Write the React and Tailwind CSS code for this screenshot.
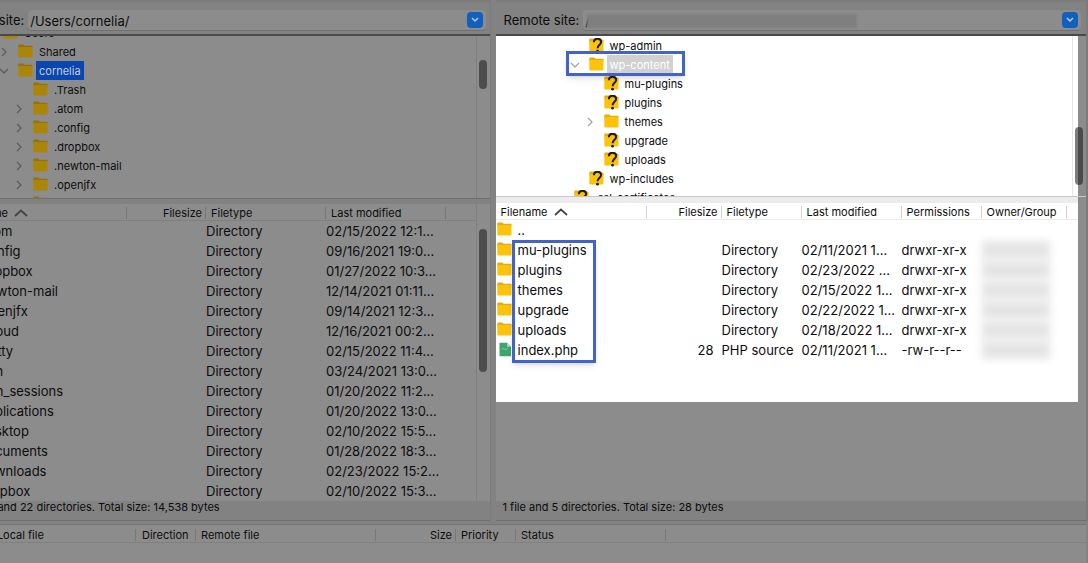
import React from "react";

const localTree = [
  { name: "Users", depth: 0, arrow: "down" },
  { name: "Shared", depth: 1, arrow: "right" },
  { name: "cornelia", depth: 1, arrow: "down", selected: true },
  { name: ".Trash", depth: 2 },
  { name: ".atom", depth: 2, arrow: "right" },
  { name: ".config", depth: 2, arrow: "right" },
  { name: ".dropbox", depth: 2, arrow: "right" },
  { name: ".newton-mail", depth: 2, arrow: "right" },
  { name: ".openjfx", depth: 2, arrow: "right" },
  { name: ".icloud", depth: 2, arrow: "right" },
];

const remoteTree = [
  { name: "wp-admin", depth: 1, unknown: true },
  { name: "wp-content", depth: 1, arrow: "down", selected: true },
  { name: "mu-plugins", depth: 2, unknown: true },
  { name: "plugins", depth: 2, unknown: true },
  { name: "themes", depth: 2, arrow: "right" },
  { name: "upgrade", depth: 2, unknown: true },
  { name: "uploads", depth: 2, unknown: true },
  { name: "wp-includes", depth: 1, unknown: true },
  { name: ".ssl_certificates", depth: 0, unknown: true },
];

const localFiles = [
  [".atom", "02/15/2022 12:1..."],
  [".config", "09/16/2021 19:0..."],
  [".dropbox", "01/27/2022 10:3..."],
  [".newton-mail", "12/14/2021 01:11..."],
  [".openjfx", "09/14/2021 12:3..."],
  [".icloud", "12/16/2021 00:2..."],
  [".putty", "02/15/2022 11:4..."],
  [".ssh", "03/24/2021 13:0..."],
  [".zsh_sessions", "01/20/2022 11:2..."],
  ["Applications", "01/20/2022 13:0..."],
  ["Desktop", "02/10/2022 15:5..."],
  ["Documents", "01/28/2022 18:3..."],
  ["Downloads", "02/23/2022 15:2..."],
  ["Dropbox", "02/10/2022 15:3..."],
];

const remoteFiles = [
  ["mu-plugins", "", "Directory", "02/11/2021 1...", "drwxr-xr-x"],
  ["plugins", "", "Directory", "02/23/2022 ...", "drwxr-xr-x"],
  ["themes", "", "Directory", "02/15/2022 1...", "drwxr-xr-x"],
  ["upgrade", "", "Directory", "02/22/2022 1...", "drwxr-xr-x"],
  ["uploads", "", "Directory", "02/18/2022 1...", "drwxr-xr-x"],
  ["index.php", "28", "PHP source", "02/11/2021 1...", "-rw-r--r--"],
];

const indents = ["pl-0", "pl-[15px]", "pl-[30px]"];

function Folder({ dim, unknown }) {
  return (
    <svg viewBox="0 0 15 15" className="h-[15px] w-[15px] shrink-0" aria-hidden="true">
      <path d="M.3 1.6Q.3.6 1.4.6h3.9l1.3 1.2h7.1q.8 0 .8.8v2H.3z" fill={dim ? "#957108" : "#e8ab0c"} />
      <path d="M.3 3h14.2v9.4q0 1-1 1H1.3q-1 0-1-1z" fill={dim ? "#ab8508" : "#fcc30d"} />
      {unknown && (
        <g>
          <path
            d="M4.9 4.3C4.9 1.9 6.3.8 8.5.8s3.6 1.2 3.6 3.2c0 2.6-3.5 3-3.5 6.2"
            fill="none"
            stroke="#1d1a10"
            strokeWidth="2"
          />
          <circle cx="8.5" cy="13.2" r="1.4" fill="#1d1a10" />
        </g>
      )}
    </svg>
  );
}

function PhpFile() {
  return (
    <svg viewBox="0 0 15 15" className="h-[15px] w-[15px] shrink-0" aria-hidden="true">
      <path d="M2.5.8h7.5l4 4v9.4H2.5z" fill="#3fa66b" />
      <path d="M10 .8v4h4z" fill="#a5d8ba" />
      <path d="M4.5 8q1.5-3 3-1t3.5-1" fill="none" stroke="#7cc79b" />
    </svg>
  );
}

function Arrow({ kind, dim }) {
  return (
    <svg viewBox="0 0 10 10" className="ml-[2px] h-[10px] w-[10px] shrink-0" aria-hidden="true">
      {kind && (
        <path
          d={kind === "right" ? "M3 1l4 4-4 4" : "M1 3l4 4 4-4"}
          fill="none"
          stroke={dim ? "#5c5c5c" : "#a6a6a6"}
          strokeWidth="1.3"
        />
      )}
    </svg>
  );
}

function SortMark() {
  return (
    <svg viewBox="0 0 14 8" className="h-2 w-[14px] shrink-0" aria-hidden="true">
      <path d="M1 7l6-5.5L13 7" fill="none" stroke="#444" strokeWidth="1.8" />
    </svg>
  );
}

function Tree({ rows, dim, label }) {
  return (
    <ul className="min-w-0 flex-1" aria-label={label}>
      {rows.map((r) => (
        <li key={r.name} className={"flex h-[19px] items-center " + indents[r.depth]}>
          <Arrow kind={r.arrow} dim={dim} />
          <span className="w-[9px] shrink-0" />
          <Folder dim={dim} unknown={r.unknown} />
          <span
            className={
              "ml-[3px] h-[19px] px-[3px] text-[11px] leading-[21px] " +
              (r.selected ? (dim ? "bg-[#0a45b0] text-[#c4cbd8]" : "bg-[#d1d1d1] text-white") : "")
            }
          >
            {r.name}
          </span>
        </li>
      ))}
    </ul>
  );
}

function SiteBar({ id, label, value, className, children }) {
  return (
    <div className={"flex h-[34px] items-start border-t-2 border-[#7c7c7c] pt-[8px] " + className}>
      <label htmlFor={id} className="h-5 shrink-0 whitespace-nowrap text-[13px] leading-[21px]">
        {label}
      </label>
      <div className="relative ml-1 flex h-[21px] min-w-0 flex-1 items-center rounded border-b border-[#717171] bg-[#8c8c8c] pl-[2px] pr-[3px]">
        <input
          id={id}
          defaultValue={value}
          className="h-5 w-full min-w-0 bg-transparent pt-px text-[13px] outline-none"
        />
        {children}
        <button
          type="button"
          aria-label="Show recent folders"
          className="flex h-4 w-4 shrink-0 items-center justify-center rounded bg-[#1260be]"
        >
          <svg viewBox="0 0 8 6" className="h-[6px] w-2" aria-hidden="true">
            <path d="M1 1l3 3 3-3" fill="none" stroke="#b9c9de" strokeWidth="1.5" />
          </svg>
        </button>
      </div>
    </div>
  );
}

const th = "h-4 p-0 align-top text-[11px] font-normal whitespace-nowrap border-b ";
const td = "h-5 p-0 text-[13px] leading-5 whitespace-nowrap ";

function Head({ children, dim, right, last }) {
  return (
    <th className={th + (dim ? "border-[#808080]" : "border-[#ececec]")}>
      <div
        className={
          "mt-[3px] flex h-3 items-center gap-[6px] leading-3 " +
          (right ? "justify-end pr-[3px] " : "pl-[5px] ") +
          (last ? "" : "border-r ") +
          (dim ? "border-[#777777]" : "border-[#d2d2d2]")
        }
      >
        {children}
      </div>
    </th>
  );
}

function LocalFiles() {
  return (
    <table className="-ml-[44px] w-[521px] table-fixed border-collapse text-left">
      <colgroup>
        <col className="w-[171px]" />
        <col className="w-[79px]" />
        <col className="w-[120px]" />
        <col className="w-[120px]" />
        <col />
      </colgroup>
      <thead>
        <tr>
          <Head dim>Filename <SortMark /></Head>
          <Head dim right>Filesize</Head>
          <Head dim>Filetype</Head>
          <Head dim>Last modified</Head>
          <Head dim last />
        </tr>
      </thead>
      <tbody>
        {localFiles.map(([name, date]) => (
          <tr key={name}>
            <td className={td}>
              <span className="flex items-center gap-[6px] pl-px">
                <Folder dim />
                {name}
              </span>
            </td>
            <td />
            <td className={td}>Directory</td>
            <td className={td}>{date}</td>
            <td />
          </tr>
        ))}
      </tbody>
    </table>
  );
}

function RemoteFiles() {
  return (
    <table className="w-full table-fixed border-collapse text-left">
      <colgroup>
        <col className="w-[151px]" />
        <col className="w-[75px]" />
        <col className="w-[80px]" />
        <col className="w-[100px]" />
        <col className="w-[80px]" />
        <col className="w-[85px]" />
        <col />
      </colgroup>
      <thead>
        <tr>
          <Head>Filename <SortMark /></Head>
          <Head right>Filesize</Head>
          <Head>Filetype</Head>
          <Head>Last modified</Head>
          <Head>Permissions</Head>
          <Head>Owner/Group</Head>
          <Head last />
        </tr>
      </thead>
      <tbody>
        <tr>
          <td className={td} colSpan={7}>
            <span className="flex items-center gap-[6px] pl-px">
              <Folder />
              ..
            </span>
          </td>
        </tr>
        {remoteFiles.map(([name, size, type, date, perm]) => (
          <tr key={name}>
            <td className={td}>
              <span className="flex items-center gap-[6px] pl-px">
                {name === "index.php" ? <PhpFile /> : <Folder />}
                {name}
              </span>
            </td>
            <td className={td + "pr-2 text-right"}>{size}</td>
            <td className={td}>{type}</td>
            <td className={td}>{date}</td>
            <td className={td}>{perm}</td>
            <td className={td}>
              <div className="h-[18px] w-[68px] bg-[#e4e4e4] blur-[4px]" />
            </td>
            <td />
          </tr>
        ))}
      </tbody>
    </table>
  );
}

const queue = [
  ["Server/Local file", "w-[182px]"],
  ["Direction", "w-[60px]"],
  ["Remote file", "w-[180px]"],
  ["Size", "w-[80px]"],
  ["Priority", "w-[60px]"],
  ["Status", "w-[150px]"],
];

export default function App() {
  return (
    <main className="flex h-screen flex-col overflow-hidden bg-[#828282] font-['Inter',sans-serif] text-[#0c0c0c]">
      <div className="flex min-h-0 flex-1">
        <section className="flex min-w-0 flex-[490] flex-col overflow-hidden border-r border-[#7b7b7b]">
          <SiteBar id="local" label="Local site:" value="/Users/cornelia/" className="-ml-[38px] pr-[4px]" />
          <div className="flex h-[165px] shrink-0 overflow-hidden border-b border-t-2 border-b-[#707070] border-t-[#4a4a4a] bg-[#8c8c8c]">
            <div className="-ml-[18px] -mt-[13px] min-w-0 flex-1">
              <Tree rows={localTree} dim label="Local folders" />
            </div>
            <div className="w-[14px] border-l border-[#808080] pl-[2px] pt-6">
              <div className="h-[29px] w-2 rounded-full bg-[#4d4d4d]" />
            </div>
          </div>
          <div className="mt-[5px] flex min-h-0 flex-1 overflow-hidden bg-[#8c8c8c]">
            <div className="min-w-0 flex-1 overflow-hidden">
              <LocalFiles />
            </div>
            <div className="w-[14px] border-l border-[#808080] pl-[2px] pt-[25px]">
              <div className="h-[143px] w-2 rounded-full bg-[#4d4d4d]" />
            </div>
          </div>
          <p className="h-5 shrink-0 whitespace-nowrap border-b border-[#6e6e6e] text-[11px] leading-3">
            <span className="-ml-[42px]">14 files and 22 directories. Total size: 14,538 bytes</span>
          </p>
        </section>

        <section className="ml-[5px] flex min-w-0 flex-[591] flex-col border-r-2 border-[#7b7b7b]">
          <SiteBar id="remote" label="Remote site:" value="/" className="pl-2 pr-[5px]">
            <div className="absolute left-[4px] top-[4px] h-[14px] w-[270px] bg-[#7f7f7f] blur-[1px]" />
          </SiteBar>
          <div className="relative flex h-[163px] shrink-0 border-b border-t-2 border-b-[#c9c9c9] border-t-[#4a4a4a] bg-[#8c8c8c]">
            <div className="flex min-w-0 flex-1 overflow-hidden bg-white">
              <div className="ml-[57px] flex min-w-0 flex-1">
                <Tree rows={remoteTree} label="Remote folders" />
              </div>
              <div className="w-[6px] border-l border-[#e6e6e6]" />
            </div>
            <div className="w-2" />
            <div className="absolute right-[3px] top-[91px] h-[58px] w-2 rounded-full bg-linear-to-r from-[#7d7d7d] from-40% to-[#4a4a4a] to-40%" />
            <div className="absolute left-[70px] top-[15px] h-[25px] w-[119px] border-[3px] border-[#4263c9] shadow-md" />
          </div>
          <div className="flex min-h-0 flex-1 flex-col bg-[#8c8c8c]">
            <div className="relative mr-2 h-[205px] bg-white">
              <div className="h-[6px] bg-[#ececec]" />
              <RemoteFiles />
              <div className="absolute left-4 top-[43px] h-[123px] w-[84px] border-[3px] border-[#4263c9] shadow-md" />
            </div>
          </div>
          <p className="h-5 shrink-0 border-b border-[#6e6e6e] pl-[7px] text-[11px] leading-3">
            1 file and 5 directories. Total size: 28 bytes
          </p>
        </section>
      </div>

      <section className="mr-[2px] mt-[3px] h-[39px] shrink-0 overflow-hidden border-t border-[#747474] bg-[#8c8c8c]">
        <div className="flex h-[18px] items-end border-b border-[#808080] pb-px">
          <div className="-ml-[46px] flex h-3 text-[11px] leading-3">
            {queue.map(([name, width]) => (
              <div
                key={name}
                className={
                  "shrink-0 whitespace-nowrap border-r border-[#777777] " +
                  width +
                  (name === "Size" ? " pr-[3px] text-right" : name === "Direction" ? " pl-[6px]" : " pl-[5px]")
                }
              >
                {name}
              </div>
            ))}
          </div>
        </div>
      </section>
    </main>
  );
}
